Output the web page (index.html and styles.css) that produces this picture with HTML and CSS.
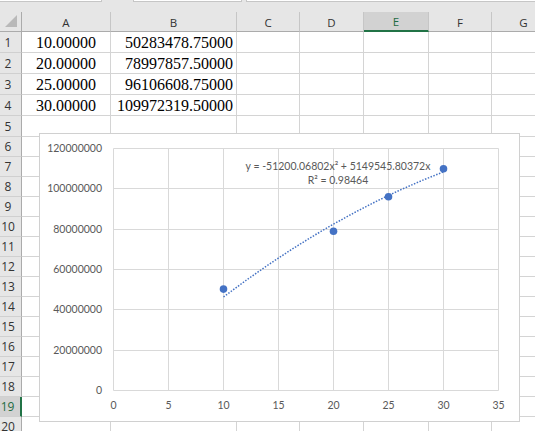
FILE: index.html
```html
<!DOCTYPE html>
<html>
<head>
<meta charset="utf-8">
<link rel="stylesheet" href="styles.css">
</head>
<body>
<div class="app">
  <div class="topstrip">
    <div class="fbox b1"></div>
    <div class="fbox b2"></div>
    <div class="fbox b3"></div>
  </div>
  <div class="sheet">
    <div class="ch corner"><span class="tri"></span></div>
    <div class="ch">A</div><div class="ch">B</div><div class="ch">C</div><div class="ch">D</div><div class="ch sel">E</div><div class="ch">F</div><div class="ch">G</div>

    <div class="rh">1</div><div class="c ca">10.00000</div><div class="c cb">50283478.75000</div><div class="c"></div><div class="c"></div><div class="c"></div><div class="c"></div><div class="c"></div>
    <div class="rh">2</div><div class="c ca">20.00000</div><div class="c cb">78997857.50000</div><div class="c"></div><div class="c"></div><div class="c"></div><div class="c"></div><div class="c"></div>
    <div class="rh">3</div><div class="c ca">25.00000</div><div class="c cb">96106608.75000</div><div class="c"></div><div class="c"></div><div class="c"></div><div class="c"></div><div class="c"></div>
    <div class="rh">4</div><div class="c ca">30.00000</div><div class="c cb">109972319.50000</div><div class="c"></div><div class="c"></div><div class="c"></div><div class="c"></div><div class="c"></div>
    <div class="rh">5</div><div class="c"></div><div class="c"></div><div class="c"></div><div class="c"></div><div class="c"></div><div class="c"></div><div class="c"></div>
    <div class="rh">6</div><div class="c"></div><div class="c"></div><div class="c"></div><div class="c"></div><div class="c"></div><div class="c"></div><div class="c"></div>
    <div class="rh">7</div><div class="c"></div><div class="c"></div><div class="c"></div><div class="c"></div><div class="c"></div><div class="c"></div><div class="c"></div>
    <div class="rh">8</div><div class="c"></div><div class="c"></div><div class="c"></div><div class="c"></div><div class="c"></div><div class="c"></div><div class="c"></div>
    <div class="rh">9</div><div class="c"></div><div class="c"></div><div class="c"></div><div class="c"></div><div class="c"></div><div class="c"></div><div class="c"></div>
    <div class="rh">10</div><div class="c"></div><div class="c"></div><div class="c"></div><div class="c"></div><div class="c"></div><div class="c"></div><div class="c"></div>
    <div class="rh">11</div><div class="c"></div><div class="c"></div><div class="c"></div><div class="c"></div><div class="c"></div><div class="c"></div><div class="c"></div>
    <div class="rh">12</div><div class="c"></div><div class="c"></div><div class="c"></div><div class="c"></div><div class="c"></div><div class="c"></div><div class="c"></div>
    <div class="rh">13</div><div class="c"></div><div class="c"></div><div class="c"></div><div class="c"></div><div class="c"></div><div class="c"></div><div class="c"></div>
    <div class="rh">14</div><div class="c"></div><div class="c"></div><div class="c"></div><div class="c"></div><div class="c"></div><div class="c"></div><div class="c"></div>
    <div class="rh">15</div><div class="c"></div><div class="c"></div><div class="c"></div><div class="c"></div><div class="c"></div><div class="c"></div><div class="c"></div>
    <div class="rh">16</div><div class="c"></div><div class="c"></div><div class="c"></div><div class="c"></div><div class="c"></div><div class="c"></div><div class="c"></div>
    <div class="rh">17</div><div class="c"></div><div class="c"></div><div class="c"></div><div class="c"></div><div class="c"></div><div class="c"></div><div class="c"></div>
    <div class="rh">18</div><div class="c"></div><div class="c"></div><div class="c"></div><div class="c"></div><div class="c"></div><div class="c"></div><div class="c"></div>
    <div class="rh sel">19</div><div class="c"></div><div class="c"></div><div class="c"></div><div class="c"></div><div class="c"></div><div class="c"></div><div class="c"></div>
    <div class="rh">20</div><div class="c"></div><div class="c"></div><div class="c"></div><div class="c"></div><div class="c"></div><div class="c"></div><div class="c"></div>
  </div>

  <div class="chart">
    <svg class="plot" width="479" height="287" viewBox="0 0 479 287" xmlns="http://www.w3.org/2000/svg">
      <g class="grid" stroke="#d9d9d9" stroke-width="1" fill="none">
        <line x1="73.5" y1="14.5" x2="458.5" y2="14.5"/>
        <line x1="73.5" y1="54.5" x2="458.5" y2="54.5"/>
        <line x1="73.5" y1="95.5" x2="458.5" y2="95.5"/>
        <line x1="73.5" y1="135.5" x2="458.5" y2="135.5"/>
        <line x1="73.5" y1="175.5" x2="458.5" y2="175.5"/>
        <line x1="73.5" y1="216.5" x2="458.5" y2="216.5"/>
        <line x1="73.5" y1="256.5" x2="458.5" y2="256.5"/>
        <line x1="73.5" y1="14.5" x2="73.5" y2="256.5"/>
        <line x1="128.5" y1="14.5" x2="128.5" y2="256.5"/>
        <line x1="183.5" y1="14.5" x2="183.5" y2="256.5"/>
        <line x1="238.5" y1="14.5" x2="238.5" y2="256.5"/>
        <line x1="293.5" y1="14.5" x2="293.5" y2="256.5"/>
        <line x1="348.5" y1="14.5" x2="348.5" y2="256.5"/>
        <line x1="403.5" y1="14.5" x2="403.5" y2="256.5"/>
        <line x1="458.5" y1="14.5" x2="458.5" y2="256.5"/>
      </g>
      <g class="ylab" text-anchor="end">
        <text x="62" y="18">120000000</text>
        <text x="62" y="58">100000000</text>
        <text x="62" y="99">80000000</text>
        <text x="62" y="139">60000000</text>
        <text x="62" y="179">40000000</text>
        <text x="62" y="220">20000000</text>
        <text x="62" y="260">0</text>
      </g>
      <g class="xlab" text-anchor="middle">
        <text x="73.5" y="275">0</text>
        <text x="128.5" y="275">5</text>
        <text x="183.5" y="275">10</text>
        <text x="238.5" y="275">15</text>
        <text x="293.5" y="275">20</text>
        <text x="348.5" y="275">25</text>
        <text x="403.5" y="275">30</text>
        <text x="458.5" y="275">35</text>
      </g>
      <polyline class="trend" fill="none" stroke="#4472c4" stroke-width="1.5" stroke-dasharray="1.5 1.5"
        points="183.5,162.98 205.5,146.75 227.5,131.35 249.5,116.77 271.5,103.03 293.5,90.10 315.5,78.01 337.5,66.74 359.5,56.29 381.5,46.67 403.5,37.88"/>
      <g fill="#4472c4">
        <circle cx="183.5" cy="155.1" r="3.8"/>
        <circle cx="293.5" cy="97.2" r="3.8"/>
        <circle cx="348.5" cy="62.7" r="3.8"/>
        <circle cx="403.5" cy="34.7" r="3.8"/>
      </g>
      <g class="eq" text-anchor="middle">
        <text x="298" y="35.5">y = -51200.06802x² + 5149545.80372x</text>
        <text x="298" y="50">R² = 0.98464</text>
      </g>
    </svg>
  </div>
</div>
</body>
</html>
```
FILE: styles.css
```css
* { box-sizing: border-box; }
html, body { margin: 0; padding: 0; }
body { background: #e6e6e6; width: 535px; height: 431px; overflow: hidden; }

.app { position: relative; width: 535px; height: 431px; overflow: hidden; }

.topstrip {
  height: 12px;
  display: flex;
  background: #e6e6e6;
}
.fbox {
  height: 2px;
  background: #ffffff;
  border: 1px solid #c6c6c6;
  border-top: none;
}
.b1 { width: 102px; border-left: none; }
.b2 { width: 109px; margin-left: 31px; }
.b3 { flex: 1; margin-left: 4px; border-right: none; }

.sheet {
  display: grid;
  grid-template-columns: 22px 89px 126px 63px 64px 65px 63px 64px;
  grid-template-rows: 20px repeat(5, 21px) repeat(15, 20px);
  background: #ffffff;
}

.ch {
  background: #e6e6e6;
  border-right: 1px solid #c6c6c6;
  border-bottom: 1px solid #ababab;
  font-family: "Open Sans", "Noto Sans", sans-serif;
  font-size: 11.5px;
  color: #333333;
  display: flex;
  align-items: center;
  justify-content: center;
  padding-top: 1px;
}
.ch.sel {
  background: #d2d2d2;
  color: #1e6b41;
  border-bottom: 2px solid #217346;
}
.corner {
  justify-content: flex-end;
  align-items: flex-end;
  padding: 0 4px 4px 0;
  border-right-color: #ababab;
}
.tri {
  width: 12px;
  height: 12px;
  background: #b9b9b9;
  clip-path: polygon(100% 0, 100% 100%, 0 100%);
}

.rh {
  background: #e6e6e6;
  border-right: 1px solid #ababab;
  border-bottom: 1px solid #d0d0d0;
  font-family: "Open Sans", "Noto Sans", sans-serif;
  font-size: 12px;
  color: #333333;
  display: flex;
  align-items: center;
  justify-content: center;
  padding-right: 5px;
}
.rh.sel {
  background: #d2d2d2;
  color: #1e6b41;
  border-right: 2px solid #217346;
}

.c {
  border-right: 1px solid #d4d4d4;
  border-bottom: 1px solid #d4d4d4;
  font-family: "Liberation Serif", "Times New Roman", serif;
  font-size: 16px;
  color: #000000;
  display: flex;
  align-items: center;
  white-space: nowrap;
  overflow: visible;
}
.ca { justify-content: center; padding-top: 1px; }
.cb { justify-content: flex-end; padding-right: 3px; padding-top: 1px; }

.chart {
  position: absolute;
  left: 39px;
  top: 133px;
  width: 481px;
  height: 289px;
  border: 1px solid #d0d0d0;
  background: #ffffff;
}
.plot { display: block; }
.plot text {
  font-family: Lato, "Open Sans", sans-serif;
  font-size: 10.5px;
  fill: #595959;
}
```
